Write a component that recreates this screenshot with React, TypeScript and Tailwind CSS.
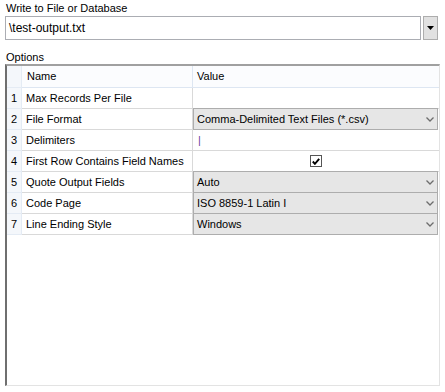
import React from "react";

const Chevron = () => (
  <svg width="8" height="5" viewBox="0 0 8 5" className="shrink-0">
    <path d="M0.5 0.5 L4 4 L7.5 0.5" fill="none" stroke="#6d6d6d" strokeWidth="1.3" />
  </svg>
);

type Row = { n: number; name: string; kind: "text" | "select" | "check" | "delim"; value?: string };

const rows: Row[] = [
  { n: 1, name: "Max Records Per File", kind: "text", value: "" },
  { n: 2, name: "File Format", kind: "select", value: "Comma-Delimited Text Files (*.csv)" },
  { n: 3, name: "Delimiters", kind: "delim", value: "|" },
  { n: 4, name: "First Row Contains Field Names", kind: "check" },
  { n: 5, name: "Quote Output Fields", kind: "select", value: "Auto" },
  { n: 6, name: "Code Page", kind: "select", value: "ISO 8859-1 Latin I" },
  { n: 7, name: "Line Ending Style", kind: "select", value: "Windows" },
];

export default function App() {
  return (
    <div className="w-[445px] h-[392px] bg-white text-black text-[11px] font-['Liberation_Sans',Arial,sans-serif] overflow-hidden">
      <div className="pl-[6px] pt-[2px] h-[16px] leading-[13px]">Write to File or Database</div>
      <div className="flex ml-[5px] gap-[2px]">
        <div className="w-[416px] h-[24px] border border-[#abadb3] bg-white pl-[3px] flex items-center leading-[14px] text-[12px]">
          \test-output.txt
        </div>
        <div className="w-[15px] h-[24px] border border-[#adadad] bg-[#e1e1e1] flex items-center justify-center">
          <svg width="7" height="4" viewBox="0 0 7 4">
            <path d="M0 0 L7 0 L3.5 4 Z" fill="#000" />
          </svg>
        </div>
      </div>
      <div className="pl-[6px] mt-[11px] h-[13px] leading-[13px]">Options</div>
      <div className="ml-[5px] w-[435px] h-[322px] border-l-2 border-t-2 border-l-[#6f6f6f] border-t-[#a0a0a0] border-r border-b border-r-[#e3e3e3] border-b-[#e3e3e3] bg-white">
        <div className="flex h-[22px] leading-[21px]">
          <div className="w-[15px] shrink-0 bg-[#f4f7fb] border-r border-b border-[#e4ebf4]" />
          <div className="w-[171px] shrink-0 bg-[#fbfcfe] border-r border-b border-[#dde6f2] pl-[5px]">Name</div>
          <div className="flex-1 bg-[#fbfcfe] border-b border-[#dde6f2] pl-[4px]">Value</div>
        </div>
        {rows.map((r) => (
          <div key={r.n} className="flex h-[21px] leading-[20px] items-start">
            <div className="w-[15px] h-[21px] shrink-0 bg-[#f4f7fb] border-r border-b border-r-[#e4ebf4] border-b-[#e4ebf4] text-center">{r.n}</div>
            <div className="w-[171px] h-[21px] shrink-0 border-r border-b border-[#d9d9d9] pl-[4px] whitespace-nowrap">{r.name}</div>
            {r.kind === "select" ? (
              <div className="flex-1 h-[22px] -mt-px mr-px border border-[#adadad] bg-[#e6e6e6] pl-[3px] pr-[3px] flex items-center justify-between whitespace-nowrap">
                <span>{r.value}</span>
                <Chevron />
              </div>
            ) : r.kind === "check" ? (
              <div className="flex-1 h-[21px] border-b border-[#d9d9d9] flex items-center justify-center">
                <div className="w-[12px] h-[12px] border border-[#555555] bg-white flex items-center justify-center">
                  <svg width="8" height="7" viewBox="0 0 8 7">
                    <path d="M0.8 3.5 L2.9 5.8 L7.2 0.8" fill="none" stroke="#000" strokeWidth="1.9" />
                  </svg>
                </div>
              </div>
            ) : (
              <div className={`flex-1 h-[21px] border-b border-[#d9d9d9] pl-[5px] ${r.kind === "delim" ? "text-[#6b3fa0]" : ""}`}>{r.value}</div>
            )}
          </div>
        ))}
      </div>
    </div>
  );
}
